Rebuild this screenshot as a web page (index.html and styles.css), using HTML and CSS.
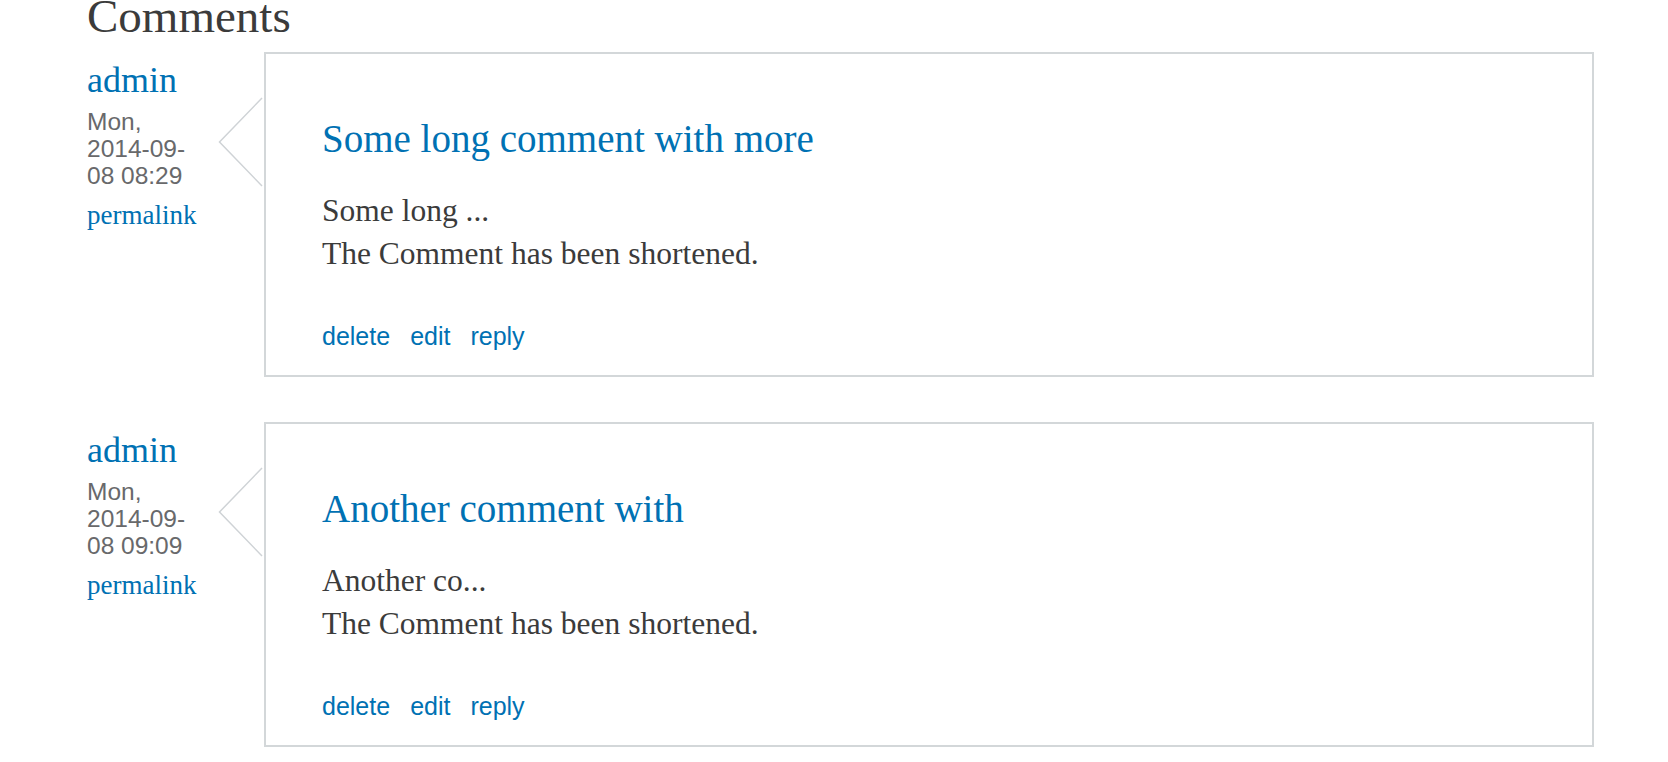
FILE: index.html
```html
<!DOCTYPE html>
<html lang="en">
<head>
<meta charset="utf-8">
<title>Comments</title>
<link rel="stylesheet" href="styles.css">
</head>
<body>
<section class="comments">
  <h2 class="comments-title">Comments</h2>

  <article class="comment">
    <div class="attribution">
      <a class="author" href="#">admin</a>
      <div class="submitted">Mon, 2014-09-<wbr>08 08:29</div>
      <a class="permalink" href="#">permalink</a>
    </div>
    <div class="comment-content">
      <svg class="comment-arrow" width="46" height="90" viewBox="0 0 46 90" aria-hidden="true">
        <polyline points="44,1 1.5,45 44,89" fill="none" stroke="#cfd3d6" stroke-width="1.5"/>
      </svg>
      <h3 class="comment-title"><a href="#">Some long comment with more</a></h3>
      <div class="comment-body">
        <p>Some long ...</p>
        <p>The Comment has been shortened.</p>
      </div>
      <ul class="links">
        <li><a href="#">delete</a></li>
        <li><a href="#">edit</a></li>
        <li><a href="#">reply</a></li>
      </ul>
    </div>
  </article>

  <article class="comment">
    <div class="attribution">
      <a class="author" href="#">admin</a>
      <div class="submitted">Mon, 2014-09-<wbr>08 09:09</div>
      <a class="permalink" href="#">permalink</a>
    </div>
    <div class="comment-content">
      <svg class="comment-arrow" width="46" height="90" viewBox="0 0 46 90" aria-hidden="true">
        <polyline points="44,1 1.5,45 44,89" fill="none" stroke="#cfd3d6" stroke-width="1.5"/>
      </svg>
      <h3 class="comment-title"><a href="#">Another comment with</a></h3>
      <div class="comment-body">
        <p>Another co...</p>
        <p>The Comment has been shortened.</p>
      </div>
      <ul class="links">
        <li><a href="#">delete</a></li>
        <li><a href="#">edit</a></li>
        <li><a href="#">reply</a></li>
      </ul>
    </div>
  </article>
</section>
</body>
</html>
```

FILE: styles.css
```css
html, body {
  margin: 0;
  padding: 0;
  background: #ffffff;
}

body {
  font-family: "Liberation Serif", serif;
  color: #3b3b3b;
}

a {
  color: #0071b3;
  text-decoration: none;
}

.comments {
  padding: 0 74px 0 87px;
}

.comments-title {
  margin: 0 0 20px;
  font-size: 47px;
  line-height: 32px;
  font-weight: normal;
  color: #3b3b3b;
}

.comment {
  display: grid;
  grid-template-columns: 177px 1fr;
  margin-bottom: 45px;
}

.attribution {
  padding-top: 8px;
  width: 112px;
}

.author {
  display: block;
  font-size: 36px;
  line-height: 40px;
}

.submitted {
  margin-top: 8px;
  font-family: "Liberation Sans", Arial, sans-serif;
  font-size: 24.5px;
  line-height: 27px;
  color: #68696b;
}

.permalink {
  display: block;
  margin-top: 11px;
  font-size: 27px;
  line-height: 30px;
}

.comment-content {
  position: relative;
  border: 2px solid #d3d7d9;
  padding: 61px 56px 24px;
}

.comment-arrow {
  position: absolute;
  left: -48px;
  top: 43px;
}

.comment-title {
  margin: 0;
  font-size: 39px;
  line-height: 48px;
  font-weight: normal;
}

.comment-body {
  margin-top: 26px;
  font-size: 31.5px;
  line-height: 43px;
}

.comment-body p {
  margin: 0;
}

.links {
  display: flex;
  gap: 20px;
  margin: 46px 0 0;
  padding: 0;
  list-style: none;
  font-family: "Liberation Sans", Arial, sans-serif;
  font-size: 25px;
  line-height: 30px;
}
```
